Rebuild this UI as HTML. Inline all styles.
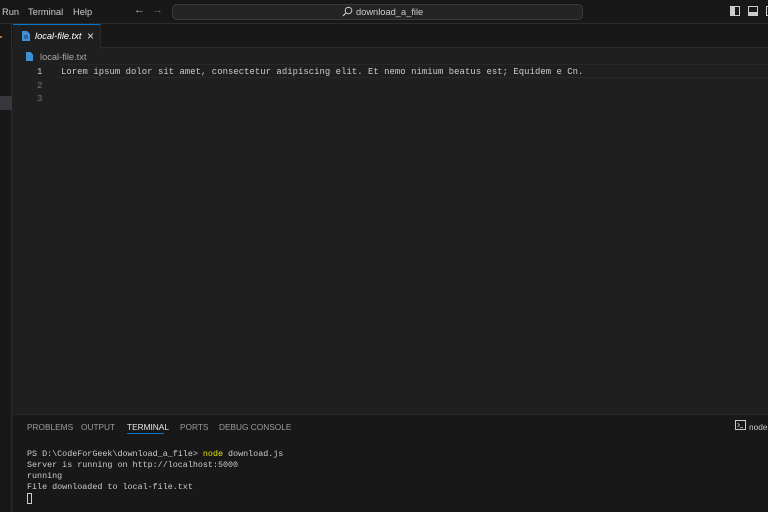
<!DOCTYPE html>
<html><head><style>
*{margin:0;padding:0;box-sizing:border-box}
body{width:768px;height:512px;background:#1f1f1f;font-family:"Liberation Sans",sans-serif;color:#ccc;position:relative;overflow:hidden}
.abs{position:absolute}
.mono{font-family:"Liberation Mono",monospace;white-space:pre}
</style></head><body>
<div class="abs" style="left:0;top:0;width:768px;height:24px;background:#181818;border-bottom:1px solid #2b2b2b"></div>
<div class="abs" style="left:2px;top:7px;font-size:9.3px;color:#ccc">Run</div>
<div class="abs" style="left:28px;top:7px;font-size:9.3px;color:#ccc">Terminal</div>
<div class="abs" style="left:73px;top:7px;font-size:9.3px;color:#ccc">Help</div>
<div class="abs" style="left:134px;top:4px;font-size:11px;color:#bbb">←</div>
<div class="abs" style="left:152px;top:4px;font-size:11px;color:#666">→</div>
<div class="abs" style="left:172px;top:4px;width:411px;height:16px;background:#242424;border:1px solid #3a3a3a;border-radius:5px"></div>
<svg class="abs" style="left:342px;top:6px" width="11" height="11" viewBox="0 0 11 11"><circle cx="6.5" cy="4.5" r="3.3" fill="none" stroke="#ccc" stroke-width="1"/><path d="M4 7 L1 10" stroke="#ccc" stroke-width="1.2"/></svg>
<div class="abs" style="left:356px;top:7px;font-size:9.3px;color:#ccc">download_a_file</div>
<svg class="abs" style="left:730px;top:6px" width="38" height="12"><rect x="0.5" y="0.5" width="9" height="9" fill="none" stroke="#ccc"/><rect x="1" y="1" width="4" height="8" fill="#ccc"/><rect x="18.5" y="0.5" width="9" height="9" fill="none" stroke="#ccc"/><rect x="19" y="6" width="8" height="3" fill="#ccc"/><rect x="36.5" y="0.5" width="9" height="9" fill="none" stroke="#ccc"/></svg>
<div class="abs" style="left:0;top:24px;width:12px;height:488px;background:#181818;border-right:1px solid #2b2b2b"></div>
<div class="abs" style="left:0;top:96px;width:12px;height:14px;background:#37373d"></div>
<div class="abs" style="left:0;top:36px;width:2px;height:2px;background:#c07030"></div>
<div class="abs" style="left:12px;top:24px;width:756px;height:24px;background:#181818;border-bottom:1px solid #2b2b2b"></div>
<div class="abs" style="left:13px;top:24px;width:88px;height:25px;background:#1f1f1f;border-top:1px solid #0078d4;border-right:1px solid #2b2b2b"></div>
<svg class="abs" style="left:22px;top:31px" width="8" height="10"><path d="M0 0H5L8 3V10H0Z" fill="#3d8fd6"/><path d="M2 5H6M2 7H6" stroke="#1f1f1f" stroke-width="0.8"/></svg>
<div class="abs" style="left:35px;top:31px;font-size:9.3px;font-style:italic;color:#fff">local-file.txt</div>
<div class="abs" style="left:87px;top:29px;font-size:12px;color:#ddd">×</div>
<svg class="abs" style="left:26px;top:52px" width="7" height="9"><path d="M0 0H4.5L7 2.5V9H0Z" fill="#3d8fd6"/></svg>
<div class="abs" style="left:40px;top:52px;font-size:9.3px;color:#aaa">local-file.txt</div>
<div class="abs" style="left:59px;top:64px;width:709px;height:14px;border-top:1px solid #282828;border-bottom:1px solid #282828"></div>
<div class="abs mono" style="left:37px;top:66px;font-size:9px;line-height:13.5px;color:#ccc">1</div>
<div class="abs mono" style="left:37px;top:79.5px;font-size:9px;line-height:13.5px;color:#6e7681">2
3</div>
<div class="abs mono" style="left:61px;top:66px;font-size:8.9px;letter-spacing:0.06px;line-height:13.5px;color:#ccc">Lorem ipsum dolor sit amet, consectetur adipiscing elit. Et nemo nimium beatus est; Equidem e Cn.</div>
<div class="abs" style="left:13px;top:414px;width:755px;height:98px;background:#181818;border-top:1px solid #2b2b2b"></div>
<div class="abs" style="left:27px;top:422px;font-size:8.3px;color:#9d9d9d">PROBLEMS</div>
<div class="abs" style="left:81px;top:422px;font-size:8.3px;color:#9d9d9d">OUTPUT</div>
<div class="abs" style="left:127px;top:422px;font-size:8.3px;color:#e7e7e7">TERMINAL</div>
<div class="abs" style="left:127px;top:433px;width:37px;height:1px;background:#0078d4"></div>
<div class="abs" style="left:180px;top:422px;font-size:8.3px;color:#9d9d9d">PORTS</div>
<div class="abs" style="left:219px;top:422px;font-size:8.3px;color:#9d9d9d">DEBUG CONSOLE</div>
<svg class="abs" style="left:735px;top:420px" width="11" height="10"><rect x="0.5" y="0.5" width="10" height="9" fill="none" stroke="#ccc"/><path d="M2.5 3L4.5 5L2.5 7M5 7.5H8" stroke="#ccc" stroke-width="0.8" fill="none"/></svg>
<div class="abs" style="left:749px;top:422px;font-size:8.3px;color:#ccc">node</div>
<div class="abs mono" style="left:27px;top:449px;font-size:8.4px;line-height:11px;color:#ccc">PS D:\CodeForGeek\download_a_file> <span style="color:#e5e510">node</span> download.js
Server is running on http://localhost:5000
running
File downloaded to local-file.txt</div>
<div class="abs" style="left:27px;top:493px;width:5px;height:11px;border:1px solid #ccc"></div>
</body></html>
